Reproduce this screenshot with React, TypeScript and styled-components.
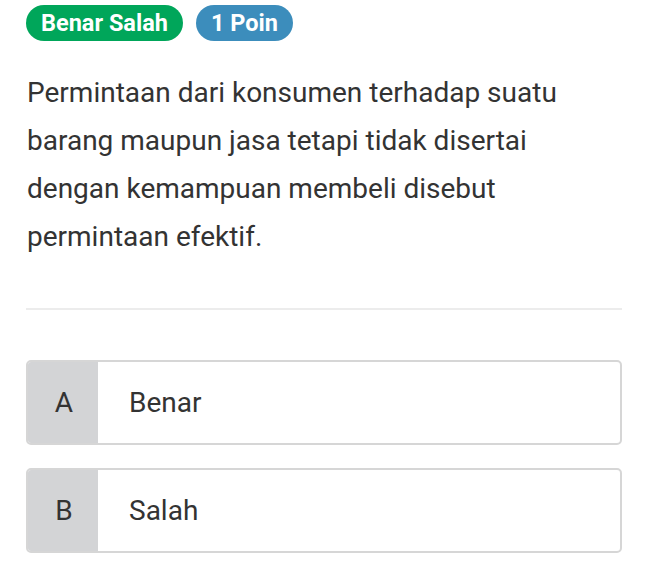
import React from "react";
import styled, { createGlobalStyle } from "styled-components";

const Global = createGlobalStyle`
  html, body { margin: 0; padding: 0; background: #fff; }
  body { font-family: Roboto, "Noto Sans", Arial, sans-serif; color: #333; }
`;

const Page = styled.div`
  padding: 5px 32px 0 26px;
  display: flex;
  flex-direction: column;
`;

const BadgeRow = styled.div`
  display: flex;
  gap: 13px;
`;

const Badge = styled.span<{ $bg: string }>`
  display: inline-flex;
  align-items: center;
  height: 36px;
  padding: 0 15px;
  border-radius: 18px;
  background: ${(p) => p.$bg};
  color: #fff;
  font-weight: 700;
  font-size: 23.5px;
`;

const Question = styled.p`
  margin: 28px 0 0 1px;
  font-size: 28px;
  line-height: 48px;
  color: #333;
`;

const Divider = styled.hr`
  margin: 47px 0 0 0;
  border: 0;
  border-top: 2px solid #ececec;
`;

const Options = styled.div`
  display: flex;
  flex-direction: column;
  gap: 23px;
  margin-top: 50px;
`;

const Option = styled.div`
  display: flex;
  height: 85px;
  box-sizing: border-box;
  border: 2px solid #d6d6d6;
  border-radius: 5px;
  overflow: hidden;
  background: #fff;
`;

const Letter = styled.div`
  width: 70px;
  padding-left: 2px;
  box-sizing: border-box;
  background: #d3d4d6;
  display: flex;
  align-items: center;
  justify-content: center;
  font-size: 28px;
  color: #333;
`;

const Label = styled.div`
  display: flex;
  align-items: center;
  padding-left: 31px;
  font-size: 28px;
  color: #333;
`;

export default function App() {
  return (
    <>
      <Global />
      <Page>
        <BadgeRow>
          <Badge $bg="#00a65a">Benar Salah</Badge>
          <Badge $bg="#3c8dbc">1 Poin</Badge>
        </BadgeRow>
        <Question>
          Permintaan dari konsumen terhadap suatu barang maupun jasa tetapi tidak disertai
          dengan kemampuan membeli disebut permintaan efektif.
        </Question>
        <Divider />
        <Options>
          <Option>
            <Letter>A</Letter>
            <Label>Benar</Label>
          </Option>
          <Option>
            <Letter>B</Letter>
            <Label>Salah</Label>
          </Option>
        </Options>
      </Page>
    </>
  );
}
